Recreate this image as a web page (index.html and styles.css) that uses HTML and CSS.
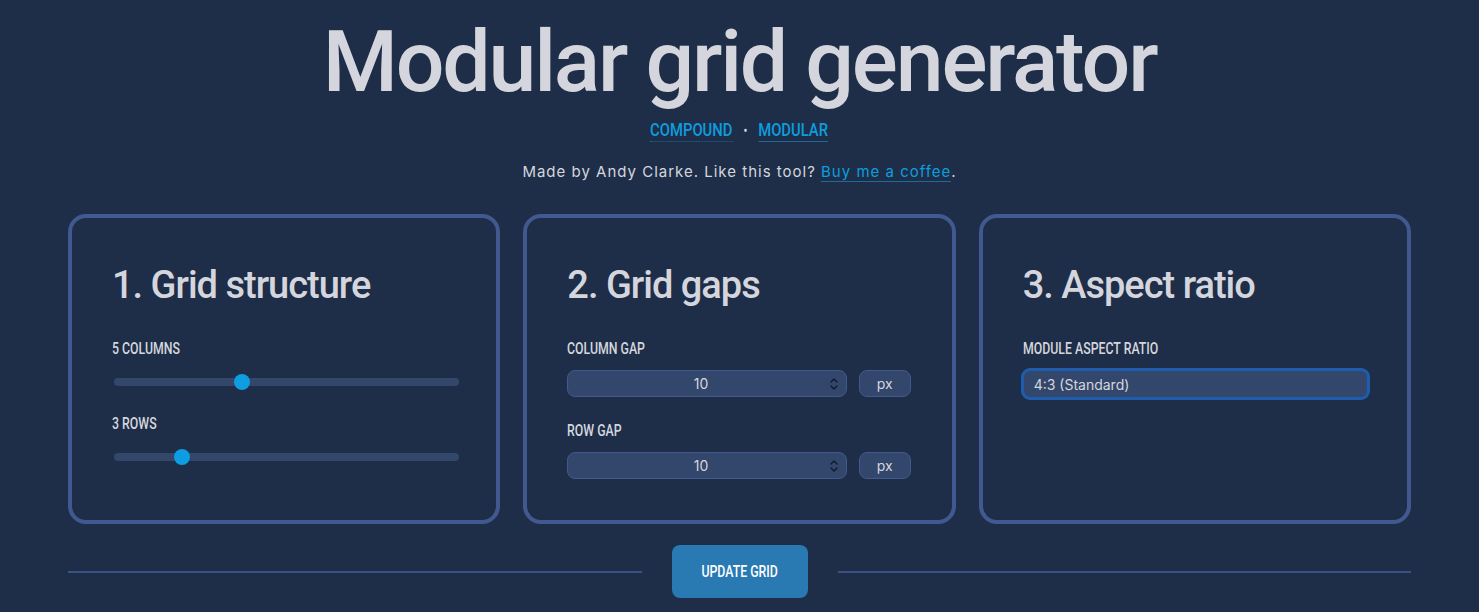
FILE: index.html
```html
<!DOCTYPE html>
<html lang="en">
<head>
    <meta charset="UTF-8">
    <meta name="viewport" content="width=device-width, initial-scale=1.0">
    <title>Modular grid generator</title>
    <link rel="stylesheet" href="styles.css">
</head>
<body>
    <header class="intro">
        <h1 class="title">Modular grid generator</h1>
        <nav class="switch">
            <a href="#" class="switch-link dotted">COMPOUND</a>
            <span class="dot">•</span>
            <a href="#" class="switch-link">MODULAR</a>
        </nav>
        <p class="credit">Made by Andy Clarke. Like this tool? <a href="#">Buy me a coffee</a>.</p>
    </header>

    <main class="panels">
        <section class="panel">
            <h2 class="panel-title">1. Grid structure</h2>
            <div class="field">
                <label class="label" for="cols"><span>5 COLUMNS</span></label>
                <input class="range" type="range" id="cols" min="1" max="12" value="5">
            </div>
            <div class="field">
                <label class="label" for="rows"><span>3 ROWS</span></label>
                <input class="range" type="range" id="rows" min="1" max="12" value="3">
            </div>
        </section>

        <section class="panel">
            <h2 class="panel-title">2. Grid gaps</h2>
            <div class="field gap-field">
                <label class="label"><span>COLUMN GAP</span></label>
                <div class="gap-row">
                    <div class="num">
                        <span class="num-value">10</span>
                        <svg class="spin" width="10" height="16" viewBox="0 0 10 16"><path d="M2 6 L5 3 L8 6 M2 10 L5 13 L8 10" fill="none" stroke="#0f1a2a" stroke-width="1.4" stroke-linecap="round" stroke-linejoin="round"/></svg>
                    </div>
                    <div class="unit">px</div>
                </div>
            </div>
            <div class="field gap-field">
                <label class="label"><span>ROW GAP</span></label>
                <div class="gap-row">
                    <div class="num">
                        <span class="num-value">10</span>
                        <svg class="spin" width="10" height="16" viewBox="0 0 10 16"><path d="M2 6 L5 3 L8 6 M2 10 L5 13 L8 10" fill="none" stroke="#0f1a2a" stroke-width="1.4" stroke-linecap="round" stroke-linejoin="round"/></svg>
                    </div>
                    <div class="unit">px</div>
                </div>
            </div>
        </section>

        <section class="panel">
            <h2 class="panel-title">3. Aspect ratio</h2>
            <div class="field">
                <label class="label"><span>MODULE ASPECT RATIO</span></label>
                <div class="select">4:3 (Standard)</div>
            </div>
        </section>
    </main>

    <div class="actions">
        <span class="rule"></span>
        <button class="update"><span>UPDATE GRID</span></button>
        <span class="rule"></span>
    </div>
</body>
</html>
```

FILE: styles.css
```css
body {
    margin: 0;
    background-color: #1e2e48;
    color: #d5d6dd;
    font-family: 'Inter', sans-serif;
    padding: 0 68px;
}
.intro {
    display: flex;
    flex-direction: column;
    align-items: center;
}
.title {
    font-family: 'Roboto', sans-serif;
    font-weight: 500;
    font-size: 86px;
    letter-spacing: -2.2px;
    line-height: 1;
    margin: 19px 0 0 0;
    color: #d5d6dd;
}
/* condensed look: no narrow face installed, so squeeze Roboto */
.switch {
    margin-top: 14px;
    display: flex;
    align-items: center;
    gap: 14px;
    font-family: 'Roboto', sans-serif;
    font-weight: 500;
    transform: scaleX(0.78);
}
.switch-link {
    font-size: 19px;
    color: #0d9ddf;
    text-decoration: none;
    border-bottom: 1px solid #1d6a9c;
    line-height: 22px;
}
.switch-link.dotted {
    border-bottom-style: dotted;
}
.dot {
    font-size: 14px;
    color: #d5d6dd;
}
.credit {
    margin: 20px 0 0 0;
    font-size: 15px;
    letter-spacing: 1px;
}
.credit a {
    color: #0d9ddf;
    text-decoration: none;
    border-bottom: 1px solid #1d6a9c;
}
.panels {
    display: grid;
    grid-template-columns: repeat(3, 1fr);
    gap: 23px;
    margin-top: 33px;
}
.panel {
    border: 4px solid #41598f;
    border-radius: 18px;
    height: 310px;
    box-sizing: border-box;
    padding: 48px 37px 0 40px;
}
.panel-title {
    font-family: 'Roboto', sans-serif;
    font-weight: 500;
    font-size: 38px;
    letter-spacing: -1px;
    line-height: 1;
    margin: 0 0 36px 0;
    color: #d5d6dd;
}
.field {
    margin-bottom: 24px;
}
.gap-field {
    margin-bottom: 25px;
}
.label {
    display: block;
    font-family: 'Roboto', sans-serif;
    font-weight: 500;
    font-size: 16px;
    line-height: 18px;
    color: #d5d6dd;
    margin-bottom: 15px;
    white-space: nowrap;
}
.label span {
    display: inline-block;
    transform: scaleX(0.77);
    transform-origin: left center;
}
.range {
    -webkit-appearance: none;
    appearance: none;
    display: block;
    width: calc(100% - 2px);
    margin: 0 0 0 2px;
    height: 18px;
    background: transparent;
}
.range::-webkit-slider-runnable-track {
    height: 8px;
    border-radius: 4px;
    background: #33476b;
}
.range::-webkit-slider-thumb {
    -webkit-appearance: none;
    width: 16px;
    height: 16px;
    border-radius: 50%;
    background: #0e9de0;
    margin-top: -4px;
    border: none;
}
.gap-row {
    display: flex;
    gap: 12px;
    margin-top: -3px;
    margin-right: 4px;
}
.num, .unit {
    height: 27px;
    box-sizing: border-box;
    background: #33466b;
    border: 1px solid #41598f;
    border-radius: 8px;
    font-size: 14px;
    display: flex;
    align-items: center;
    justify-content: center;
    color: #d5d6dd;
}
.num {
    flex: 1;
    position: relative;
    padding-right: 12px;
}
.spin {
    position: absolute;
    right: 7px;
    top: 5px;
}
.unit {
    width: 52px;
}
.select {
    height: 32px;
    box-sizing: border-box;
    background: #33466b;
    border: 3px solid #1e5dae;
    border-radius: 9px;
    font-size: 14px;
    display: flex;
    align-items: center;
    padding-left: 10px;
    margin: -5px 0 0 -2px;
}
.actions {
    display: flex;
    align-items: center;
    gap: 30px;
    margin-top: 21px;
}
.rule {
    flex: 1;
    height: 2px;
    background: #3a5283;
}
.update {
    width: 136px;
    height: 53px;
    border: none;
    border-radius: 8px;
    background: #2979b3;
    color: #fff;
    font-family: 'Roboto', sans-serif;
    font-size: 16px;
    font-weight: 500;
}
.update span {
    display: inline-block;
    transform: scaleX(0.77);
}
```
